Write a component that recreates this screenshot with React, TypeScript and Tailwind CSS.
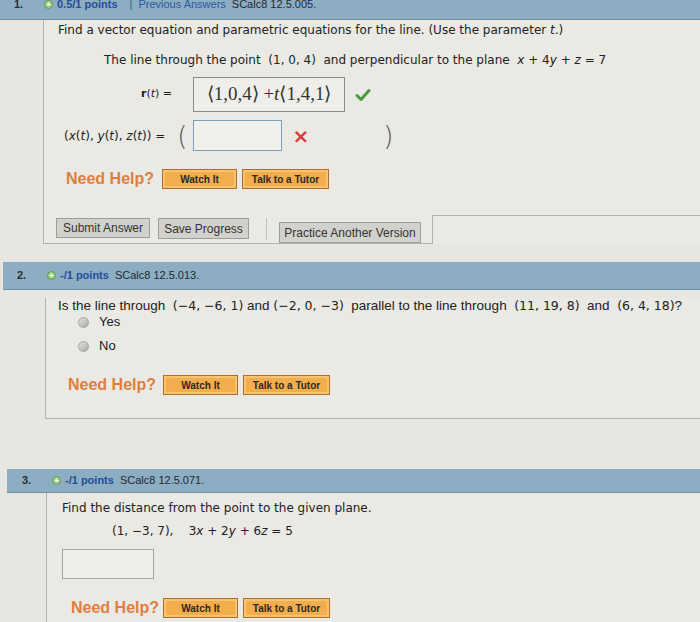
import React from 'react';

const sans = { fontFamily: '"DejaVu Sans", Verdana, sans-serif' };
const arial = { fontFamily: '"Liberation Sans", Arial, sans-serif' };

function Header({ num, points, prev, code, className }: { num: string; points: string; prev?: boolean; code: string; className: string }) {
  return (
    <div
      className={`flex items-center bg-[#8cadc2] border-b border-[#6f90a5] pl-[14px] text-[11px] ${className}`}
      style={arial}
    >
      <span className="w-[30px] font-bold text-[#2a2f33]">{num}</span>
      <span className="w-[9px] h-[9px] rounded-full bg-[#9fd08a] border border-[#5e9a4c] flex items-center justify-center text-[7px] leading-none text-white font-bold">
        +
      </span>
      <span className="ml-[4px] font-bold text-[#1f4f9a]">{points}</span>
      {prev && (
        <>
          <span className="ml-[12px] text-[#3d5f80]">|</span>
          <span className="ml-[6px] text-[#2c5aa5]">Previous Answers</span>
        </>
      )}
      <span className="ml-[6px] text-[#1f2a33]">{code}</span>
    </div>
  );
}

function NeedHelp({ w, pl }: { w: string; pl: string }) {
  return (
    <div className={`flex items-center h-[22px] ${pl}`} style={arial}>
      <div className={`${w} text-[16px] font-bold text-[#df7f3e] leading-none`}>Need Help?</div>
      <button className="h-[20px] w-[75px] bg-[#f2ad4c] border border-[#b36c2a] shadow-[inset_0_0_0_2px_#f6c46e] text-[10px] font-bold text-[#2e2a24]">
        Watch It
      </button>
      <button className="ml-[5px] h-[20px] w-[87px] bg-[#f2ad4c] border border-[#b36c2a] shadow-[inset_0_0_0_2px_#f6c46e] text-[10px] font-bold text-[#2e2a24]">
        Talk to a Tutor
      </button>
    </div>
  );
}

function Radio({ label, className }: { label: string; className: string }) {
  return (
    <div className={`flex items-center h-[16px] pl-[32px] ${className}`} style={arial}>
      <span className="w-[11px] h-[11px] rounded-full bg-gradient-to-br from-[#e4e4e0] to-[#a9a9a6] border border-[#a5a5a2]" />
      <span className="ml-[10px] text-[13px] text-[#222]">{label}</span>
    </div>
  );
}

export default function App() {
  return (
    <div className="w-[700px] h-[622px] overflow-hidden bg-[#e7e6e0] text-[#222]">
      <Header num="1." points="0.5/1 points" prev code="SCalc8 12.5.005." className="h-[30px] -mt-[10px]" />

      {/* question 1 */}
      <div className="ml-[43px] border-l border-[#b3b3ae] bg-[#eae9e3]" style={sans}>
        <div className="pt-[2px] pl-[14px] text-[12px] leading-[16px]">
          Find a vector equation and parametric equations for the line. (Use the parameter <i>t</i>.)
        </div>
        <div className="mt-[14px] pl-[60px] text-[12px] leading-[16px]">
          The line through the point &nbsp;(1, 0, 4)&nbsp; and perpendicular to the plane &nbsp;
          <i>x</i> + 4<i>y</i> + <i>z</i> = 7
        </div>

        <div className="mt-[9px] flex items-center pl-[97px]">
          <span className="w-[52px] text-[11px]">
            <b>r</b>(<i>t</i>) =
          </span>
          <div
            className="h-[35px] w-[152px] border border-[#8a8a86] bg-[#efeee9] flex items-center justify-center text-[19px] text-[#333]"
            style={{ fontFamily: '"Liberation Serif", "Times New Roman", serif' }}
          >
            ⟨1,0,4⟩ + <i>t</i>⟨1,4,1⟩
          </div>
          <svg className="ml-[10px]" width="16" height="14" viewBox="0 0 16 14">
            <path d="M2 7.5 L6 11.5 L14 2.5" fill="none" stroke="#4d9a3c" strokeWidth="3" strokeLinecap="round" strokeLinejoin="round" />
          </svg>
        </div>

        <div className="mt-[8px] flex items-center pl-[20px]">
          <span className="text-[12px]">
            (<i>x</i>(<i>t</i>), <i>y</i>(<i>t</i>), <i>z</i>(<i>t</i>)) =
          </span>
          <span className="ml-[12px] text-[26px] font-light text-[#555] leading-none">(</span>
          <div className="ml-[6px] h-[31px] w-[89px] border border-[#7d9fbf] bg-[#f1f0eb]" />
          <span className="ml-[10px] text-[20px] font-bold text-[#d83b3f] leading-none">×</span>
          <span className="ml-[74px] text-[26px] font-light text-[#555] leading-none">)</span>
        </div>

        <div className="mt-[17px]">
          <NeedHelp w="w-[96px]" pl="pl-[22px]" />
        </div>

        <div className="mt-[25px] flex" style={arial}>
          <div className="w-[389px] border-b border-r border-[#b3b3ae] flex items-start pl-[12px] pt-[3px] h-[29px]">
            <button className="h-[20px] w-[94px] bg-[#d2d2cd] border border-[#9d9d99] text-[12px] text-[#333]">
              Submit Answer
            </button>
            <button className="ml-[8px] h-[21px] w-[91px] bg-[#d2d2cd] border border-[#9d9d99] text-[12px] text-[#333]">
              Save Progress
            </button>
            <span className="ml-[17px] w-px h-[22px] bg-[#c2c2bd]" />
            <button className="ml-[12px] mt-[4px] h-[21px] w-[142px] bg-[#d2d2cd] border border-[#9d9d99] text-[12px] text-[#333]">
              Practice Another Version
            </button>
          </div>
          <div className="flex-1 border-t border-[#b3b3ae]" />
        </div>
      </div>

      <Header num="2." points="-/1 points" code="SCalc8 12.5.013." className="mt-[18px] ml-[3px] h-[28px] pl-[12px]" />

      {/* question 2 */}
      <div className="ml-[45px] border-l border-b border-[#b3b3ae] bg-[#eae9e3] pb-[22px]">
        <div className="mt-[8px] pl-[12px] text-[13.5px] leading-[16px] whitespace-nowrap" style={arial}>
          Is the line through&nbsp; <span style={sans} className="text-[12.5px]">(−4, −6, 1)</span> and{' '}
          <span style={sans} className="text-[12.5px]">(−2, 0, −3)</span>&nbsp; parallel to the line through&nbsp;{' '}
          <span style={sans} className="text-[12.5px]">(11, 19, 8)</span>&nbsp; and&nbsp;{' '}
          <span style={sans} className="text-[12.5px]">(6, 4, 18)</span>?
        </div>
        <Radio label="Yes" className="" />
        <Radio label="No" className="mt-[8px]" />
        <div className="mt-[20px]">
          <NeedHelp w="w-[95px]" pl="pl-[22px]" />
        </div>
      </div>

      <Header num="3." points="-/1 points" code="SCalc8 12.5.071." className="mt-[50px] ml-[7px] h-[24px] pl-[15px]" />

      {/* question 3 */}
      <div className="ml-[46px] border-l border-[#b3b3ae] bg-[#eae9e3] h-[200px]" style={sans}>
        <div className="pt-[7px] pl-[15px] text-[12px] leading-[16px]">
          Find the distance from the point to the given plane.
        </div>
        <div className="mt-[7px] pl-[65px] text-[12px] leading-[16px]">
          (1, −3, 7), &nbsp;&nbsp; 3<i>x</i> + 2<i>y</i> + 6<i>z</i> = 5
        </div>
        <div className="mt-[10px] ml-[15px] h-[30px] w-[92px] border border-[#a5a5a1] bg-[#efeee9]" />
        <div className="mt-[18px]">
          <NeedHelp w="w-[92px]" pl="pl-[24px]" />
        </div>
      </div>
    </div>
  );
}
